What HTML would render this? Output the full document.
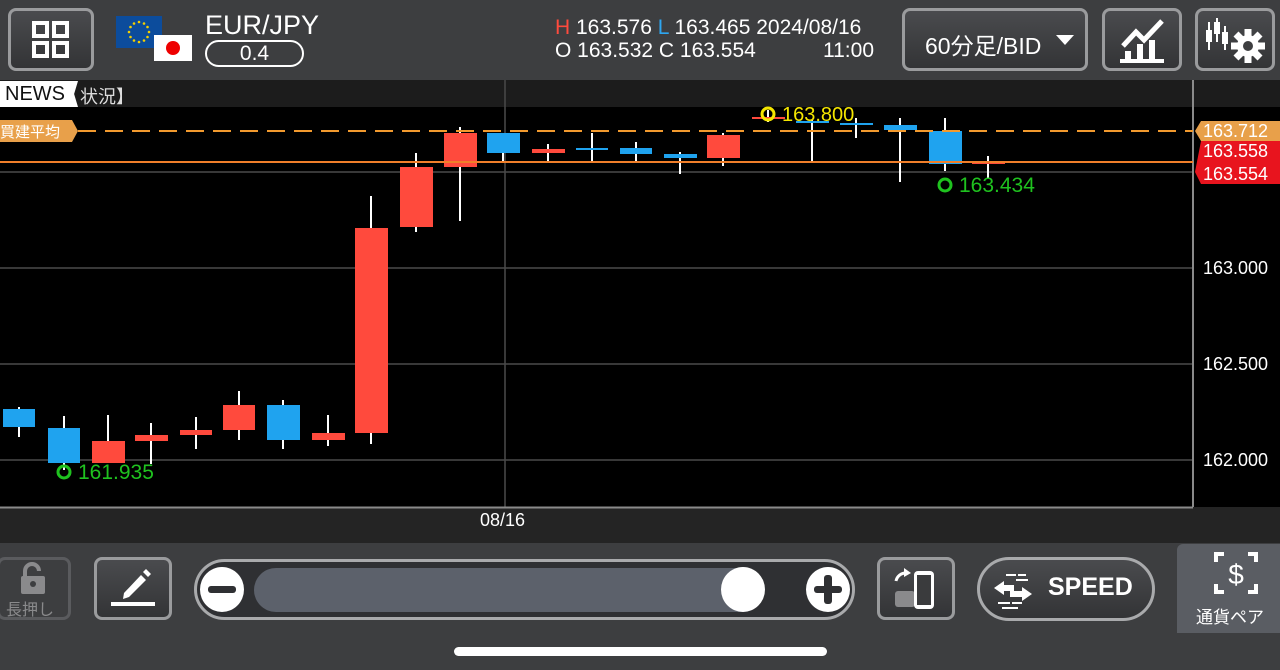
<!DOCTYPE html>
<html><head><meta charset="utf-8"><style>
*{margin:0;padding:0;box-sizing:border-box}
body{width:1280px;height:670px;overflow:hidden;background:#3d3e40;font-family:"Liberation Sans","Noto Sans CJK JP",sans-serif;color:#fff;position:relative}
.abs{position:absolute}
.btn{position:absolute;border:3px solid #9a9b9d;border-radius:8px;background:linear-gradient(#4a4b4e,#333436)}
</style></head><body>
<div class="btn" style="left:8px;top:8px;width:86px;height:63px"></div>
<svg class="abs" style="left:31px;top:20px" width="40" height="40"><g fill="none" stroke="#fff" stroke-width="4"><rect x="3" y="3" width="13" height="13"/><rect x="23" y="3" width="13" height="13"/><rect x="3" y="23" width="13" height="13"/><rect x="23" y="23" width="13" height="13"/></g></svg>
<div class="abs" style="left:116px;top:16px;width:46px;height:32px;background:#0c4c9c"></div>
<svg class="abs" style="left:116px;top:16px" width="46" height="32"><g fill="#f5d000"><circle cx="23" cy="6" r="1.3"/><circle cx="23" cy="26" r="1.3"/><circle cx="13" cy="16" r="1.3"/><circle cx="33" cy="16" r="1.3"/><circle cx="28" cy="7.5" r="1.3"/><circle cx="18" cy="7.5" r="1.3"/><circle cx="28" cy="24.5" r="1.3"/><circle cx="18" cy="24.5" r="1.3"/><circle cx="14.5" cy="11" r="1.3"/><circle cx="31.5" cy="11" r="1.3"/><circle cx="14.5" cy="21" r="1.3"/><circle cx="31.5" cy="21" r="1.3"/></g></svg>
<div class="abs" style="left:154px;top:35px;width:38px;height:26px;background:#fff"><div style="position:absolute;left:12px;top:6px;width:14px;height:14px;border-radius:50%;background:#e00"></div></div>
<div class="abs" style="left:205px;top:10px;font-size:27px">EUR/JPY</div>
<div class="abs" style="left:205px;top:40px;width:99px;height:27px;border:2px solid #fff;border-radius:14px;text-align:center;font-size:21px;line-height:23px">0.4</div>
<div class="abs" style="left:555px;top:16px;font-size:21px;line-height:23px;white-space:nowrap"><span style="color:#ff4a3d">H</span> 163.576 <span style="color:#2ea6f0">L</span> 163.465 2024/08/16</div>
<div class="abs" style="left:555px;top:39px;font-size:21px;line-height:23px;white-space:nowrap">O 163.532 C 163.554</div>
<div class="abs" style="left:823px;top:39px;font-size:21px;line-height:23px">11:00</div>
<div class="btn" style="left:902px;top:8px;width:186px;height:63px"></div>
<div class="abs" style="left:925px;top:27px;font-size:23px">60分足/BID</div>
<svg class="abs" style="left:1055px;top:34px" width="20" height="12"><path d="M1 1H19L10 11Z" fill="#fff"/></svg>
<div class="btn" style="left:1102px;top:8px;width:80px;height:63px"></div>
<svg class="abs" style="left:1118px;top:18px" width="50" height="46"><path d="M5 28L18 14L26 22L44 3" fill="none" stroke="#fff" stroke-width="5"/><path d="M7 33h6v8h-6zM19 26h6v15h-6zM31 22h6v19h-6zM2 41h44v4H2z" fill="#fff"/></svg>
<div class="btn" style="left:1195px;top:8px;width:80px;height:63px"></div>
<svg class="abs" style="left:1203px;top:16px" width="66" height="50"><g stroke="#fff" stroke-width="2"><path d="M6 6V34M14 2V26M22 10V34"/></g><g fill="#fff"><rect x="3" y="14" width="6" height="12"/><rect x="11" y="6" width="6" height="12"/><rect x="19" y="16" width="6" height="12"/></g><g transform="translate(45,30)"><circle r="11" fill="#fff"/><g fill="#fff"><rect x="-3.5" y="-17" width="7" height="34"/><rect x="-3.5" y="-17" width="7" height="34" transform="rotate(45)"/><rect x="-3.5" y="-17" width="7" height="34" transform="rotate(90)"/><rect x="-3.5" y="-17" width="7" height="34" transform="rotate(135)"/></g><circle r="5" fill="#3d3e40"/></g></svg>
<div class="abs" style="left:0;top:80px;width:1280px;height:27px;background:#1c1c1c"></div>
<div class="abs" style="left:0;top:81px;width:78px;height:26px;background:#fff;clip-path:polygon(0 0,100% 0,95% 50%,100% 100%,0 100%)"></div>
<div class="abs" style="left:5px;top:83px;font-size:20px;color:#111">NEWS</div>
<div class="abs" style="left:80px;top:83px;font-size:18px;color:#ddd">状況】</div>
<div class="abs" style="left:0;top:107px;width:1280px;height:400px;background:#000"></div>
<div class="abs" style="left:0;top:507px;width:1280px;height:36px;background:#242424"></div>
<div class="abs" style="left:480px;top:510px;font-size:18px">08/16</div>
<svg class="abs" style="left:0;top:0" width="1280" height="545">
<g stroke="#4a4a4a" stroke-width="1.5"><path d="M0 172H1193M0 268H1193M0 364H1193M0 460H1193M505 80V507"/></g>
<path d="M1193 80V507M0 507.5H1193" stroke="#8a8a8a" stroke-width="2"/>
<g stroke="#fff" stroke-width="2">
<path d="M19 407V437M64 416V470M108 415V463M151 423V464M196 417V449M239 391V440M283 400V449M328 415V446M371 196V444M416 153V232M460 127V221M503 133V162M548 144V163M592 133V162M636 142V162M680 152V174M723 133V166M768 110V122M812 120V162M856 118V138M900 118V182M945 118V171M988 156V178"/></g>
<g fill="#1fa3ef"><rect x="3" y="409" width="32" height="18"/><rect x="48" y="428" width="32" height="35"/><rect x="267" y="405" width="33" height="35"/><rect x="487" y="133" width="33" height="20"/><rect x="576" y="148" width="32" height="2"/><rect x="620" y="148" width="32" height="6"/><rect x="664" y="154" width="33" height="4"/><rect x="796" y="121" width="33" height="2"/><rect x="840" y="123" width="33" height="2"/><rect x="884" y="125" width="33" height="5"/><rect x="929" y="131" width="33" height="33"/></g>
<g fill="#ff4a3d"><rect x="92" y="441" width="33" height="22"/><rect x="135" y="435" width="33" height="6"/><rect x="180" y="430" width="32" height="5"/><rect x="223" y="405" width="32" height="25"/><rect x="312" y="433" width="33" height="7"/><rect x="355" y="228" width="33" height="205"/><rect x="400" y="167" width="33" height="60"/><rect x="444" y="133" width="33" height="34"/><rect x="532" y="149" width="33" height="4"/><rect x="707" y="135" width="33" height="23"/><rect x="752" y="117" width="33" height="2"/><rect x="972" y="161" width="33" height="3"/></g>
<path d="M78 131H1193" stroke="#f29a2e" stroke-width="2" stroke-dasharray="18 9"/>
<path d="M0 162H1193" stroke="#f07f2a" stroke-width="2"/>
<path d="M0 120H72L78 131L72 142H0Z" fill="#e8a04a"/>
<text x="0" y="137" font-size="15" fill="#fff" font-family="Noto Sans CJK JP,sans-serif">買建平均</text>
<circle cx="768" cy="114" r="6" fill="none" stroke="#f5e600" stroke-width="3"/>
<text x="782" y="121" font-size="20" fill="#f5e600">163.800</text>
<circle cx="945" cy="185" r="6" fill="none" stroke="#1fc21f" stroke-width="3"/>
<text x="959" y="192" font-size="21" fill="#1fc21f">163.434</text>
<circle cx="64" cy="472" r="6" fill="none" stroke="#1fc21f" stroke-width="3"/>
<text x="78" y="479" font-size="21" fill="#1fc21f">161.935</text>
<path d="M1201 121H1280V141H1201L1195 131Z" fill="#e8a04a"/>
<path d="M1201 141H1280V184H1201L1195 172Z" fill="#e8141e"/>
<g font-size="18" fill="#fff"><text x="1203" y="137">163.712</text><text x="1203" y="157">163.558</text><text x="1203" y="180">163.554</text><text x="1203" y="274">163.000</text><text x="1203" y="370">162.500</text><text x="1203" y="466">162.000</text></g>
</svg>
<div class="abs" style="left:-3px;top:557px;width:74px;height:63px;border:3px solid #5a5b5e;border-radius:8px"></div>
<svg class="abs" style="left:18px;top:562px" width="30" height="32"><path d="M7 14V9a7 7 0 0 1 14 0" fill="none" stroke="#8a8a8c" stroke-width="4"/><rect x="3" y="14" width="24" height="18" rx="2" fill="#8a8a8c"/><circle cx="15" cy="22" r="3" fill="#3d3e40"/></svg>
<div class="abs" style="left:6px;top:596px;font-size:16px;color:#8a8a8c">長押し</div>
<div class="btn" style="left:94px;top:557px;width:78px;height:63px"></div>
<svg class="abs" style="left:108px;top:565px" width="50" height="48"><path d="M16 28L33 10L38 15L21 32L15 34Z" fill="#fff"/><path d="M35 7L38 4L43 9L40 12Z" fill="#fff"/><rect x="3" y="37" width="44" height="4" fill="#fff"/></svg>
<div class="abs" style="left:194px;top:559px;width:661px;height:61px;border:3px solid #a9aaac;border-radius:31px;background:#2f3033"></div>
<div class="abs" style="left:254px;top:568px;width:510px;height:44px;border-radius:22px;background:#5c616b"></div>
<div class="abs" style="left:200px;top:567px;width:44px;height:45px;border-radius:50%;background:#fff"></div>
<div class="abs" style="left:208px;top:586px;width:28px;height:7px;border-radius:3px;background:#2f3033"></div>
<div class="abs" style="left:721px;top:567px;width:44px;height:45px;border-radius:50%;background:#fff"></div>
<div class="abs" style="left:806px;top:567px;width:44px;height:45px;border-radius:50%;background:#fff"></div>
<div class="abs" style="left:814px;top:586px;width:28px;height:7px;border-radius:3px;background:#2f3033"></div>
<div class="abs" style="left:824px;top:575px;width:8px;height:29px;border-radius:3px;background:#2f3033"></div>
<div class="btn" style="left:877px;top:557px;width:78px;height:63px"></div>
<svg class="abs" style="left:893px;top:565px" width="50" height="48"><path d="M3 16a10 10 0 0 1 10-8" fill="none" stroke="#fff" stroke-width="3"/><path d="M11 3L18 8L11 12Z" fill="#fff"/><rect x="2" y="26" width="20" height="16" rx="3" fill="#8a8a8c"/><rect x="21" y="6" width="20" height="38" rx="4" fill="#fff"/><rect x="24" y="10" width="14" height="30" fill="#3a3b3d"/></svg>
<div class="abs" style="left:977px;top:557px;width:178px;height:64px;border:3px solid #a9aaac;border-radius:32px;background:linear-gradient(#4a4b4e,#333436)"></div>
<svg class="abs" style="left:992px;top:570px" width="50" height="40"><g fill="#fff"><path d="M2 18L12 11V15H22V21H12V25Z"/><path d="M40 24L30 17V21H18V27H30V31Z"/><rect x="14" y="4" width="10" height="2"/><rect x="26" y="4" width="8" height="2"/><rect x="24" y="9" width="12" height="2"/><rect x="6" y="32" width="12" height="2"/><rect x="20" y="32" width="10" height="2"/><rect x="10" y="37" width="16" height="2"/></g></svg>
<div class="abs" style="left:1048px;top:573px;font-size:25px;font-weight:bold">SPEED</div>
<div class="abs" style="left:1177px;top:544px;width:103px;height:89px;background:#5a5d63;border-radius:6px 0 0 0"></div>
<svg class="abs" style="left:1214px;top:552px" width="44" height="42"><g fill="none" stroke="#fff" stroke-width="4"><path d="M2 10V2H10M34 2H42V10M2 32V40H10M34 40H42V32"/></g><text x="22" y="32" font-size="28" fill="#fff" text-anchor="middle" font-family="Liberation Sans">$</text></svg>
<div class="abs" style="left:1196px;top:603px;font-size:17px">通貨ペア</div>
<div class="abs" style="left:454px;top:647px;width:373px;height:9px;border-radius:5px;background:#fff"></div>
</body></html>
